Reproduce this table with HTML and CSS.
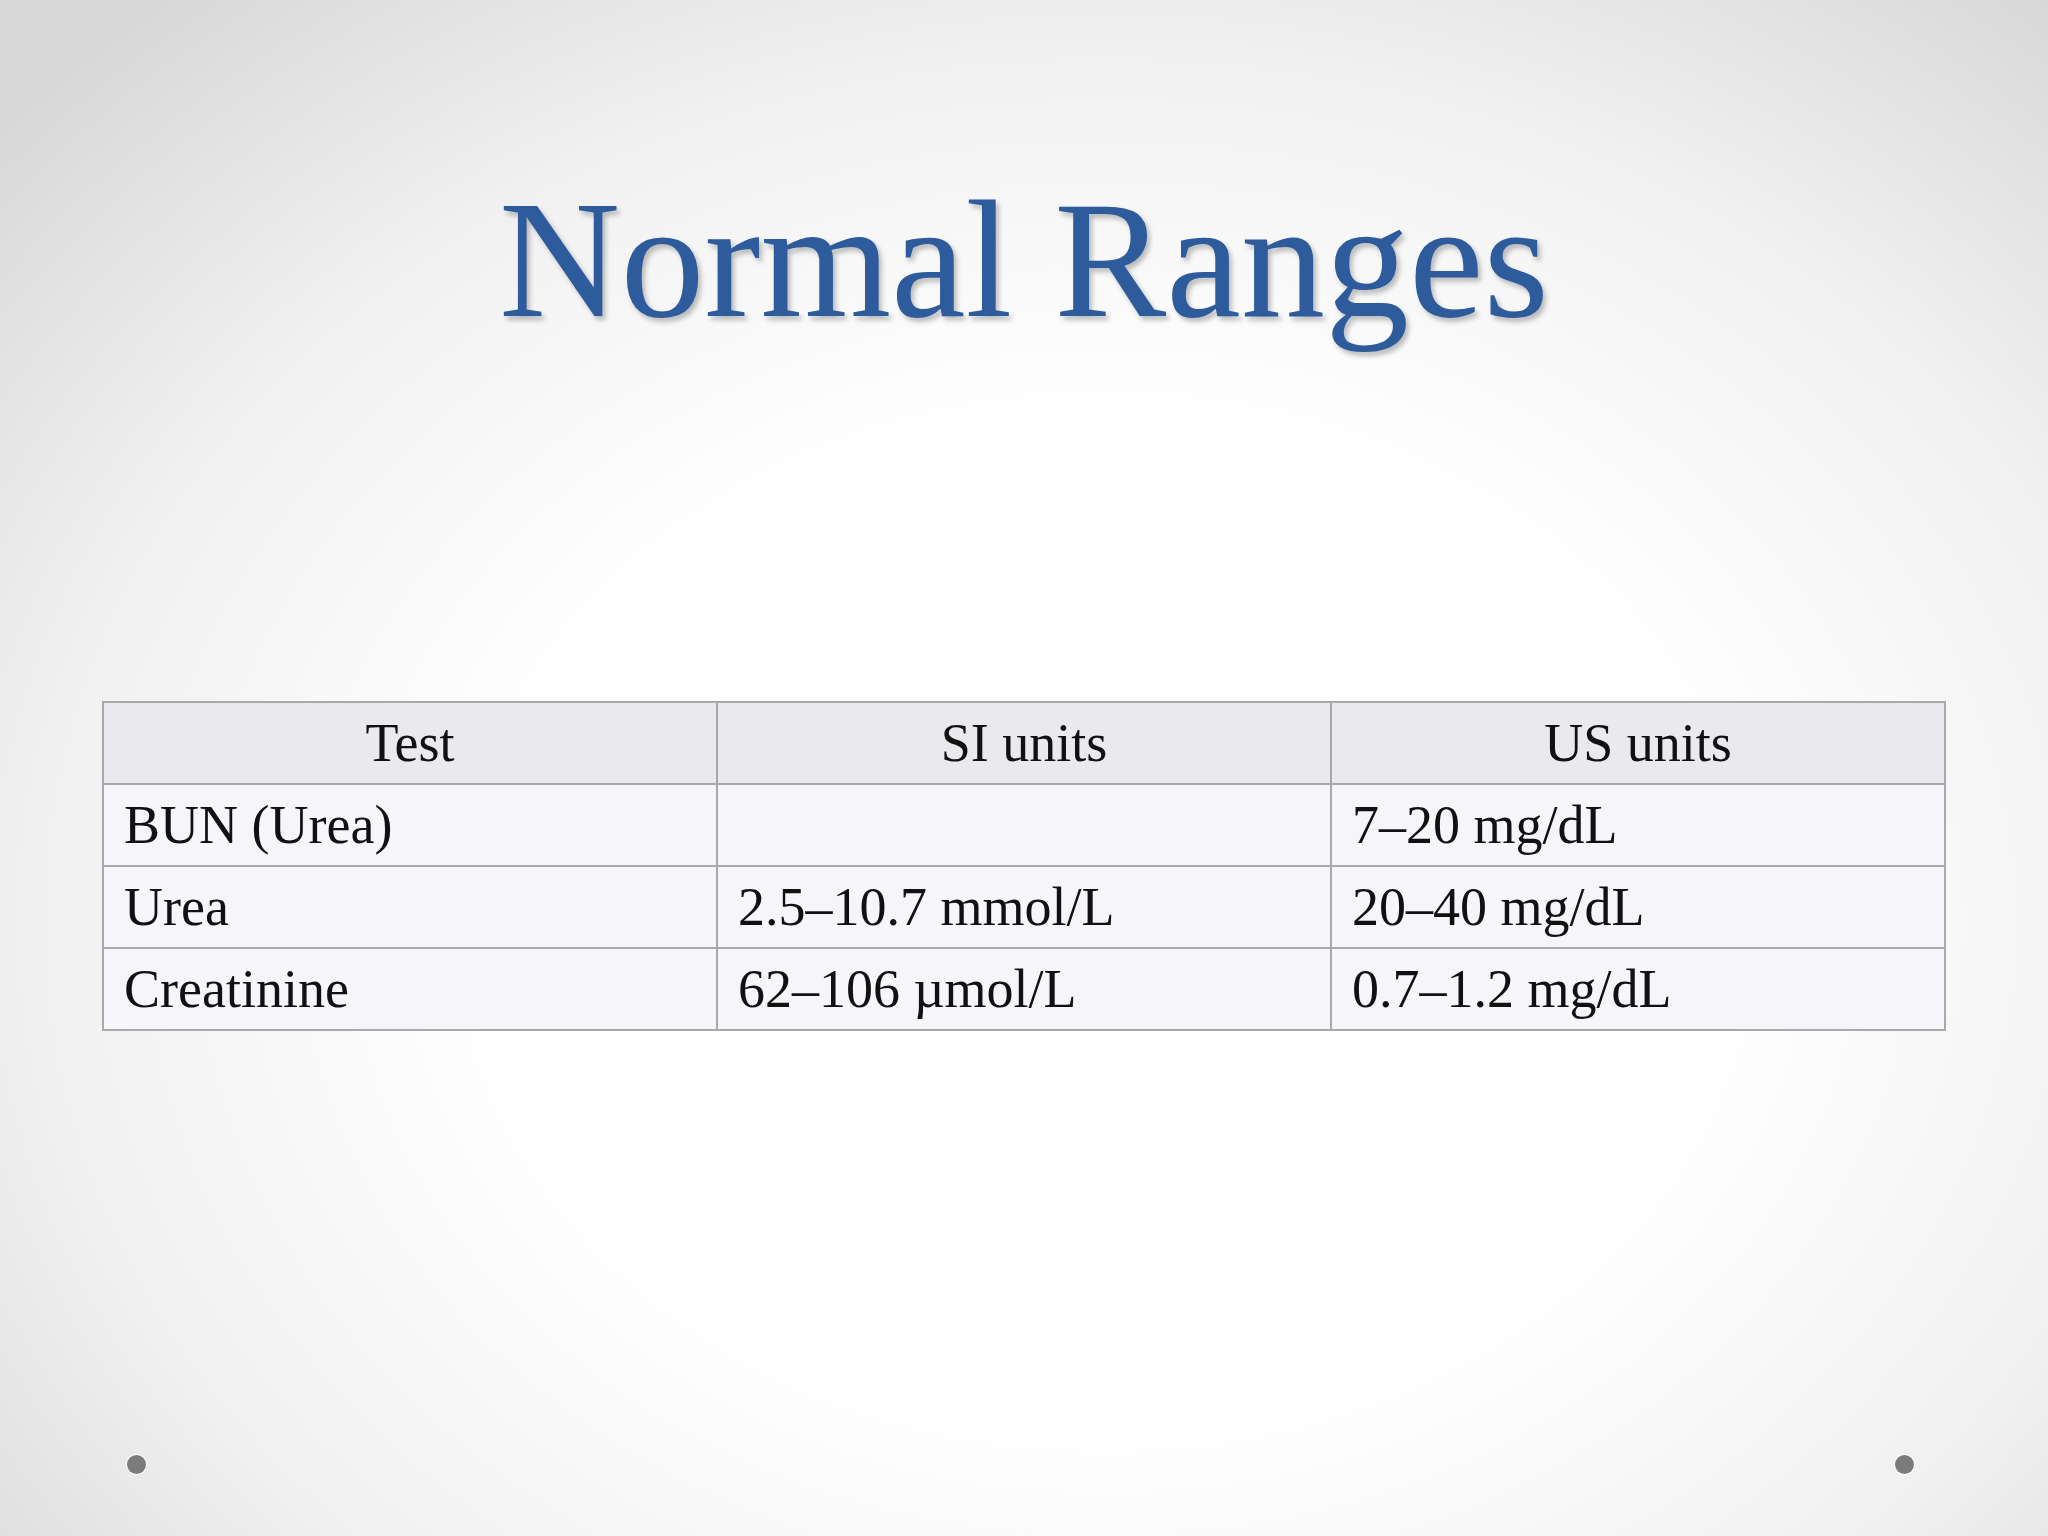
FILE: index.html
```html
<!DOCTYPE html>
<html>
  <head>
    <meta charset="UTF-8">
    <title>Normal Ranges</title>
    <link rel="stylesheet" href="styles.css">
  </head>
  <body>

    <div class="slide">
      <h1 class="title">Normal Ranges</h1>

      <table class="ranges">
        <thead>
          <tr>
            <th>Test</th>
            <th>SI units</th>
            <th>US units</th>
          </tr>
        </thead>
        <tbody>
          <tr>
            <td>BUN (Urea)</td>
            <td></td>
            <td>7–20 mg/dL</td>
          </tr>
          <tr>
            <td>Urea</td>
            <td>2.5–10.7 mmol/L</td>
            <td>20–40 mg/dL</td>
          </tr>
          <tr>
            <td>Creatinine</td>
            <td>62–106 µmol/L</td>
            <td>0.7–1.2 mg/dL</td>
          </tr>
        </tbody>
      </table>

      <footer>
        <span class="dot"></span>
        <span class="dot"></span>
      </footer>
    </div>

  </body>
</html>
```

FILE: styles.css
```css
html, body {
  height: 100%;
}

body {
  margin: 0;
  background: #fff;
}

.slide {
  width: 2048px;
  height: 1536px;
  display: flex;
  flex-direction: column;
  font-family: "Palatino Linotype", "Book Antiqua", Palatino, "P052", "URW Palladio L", "Liberation Serif", serif;
  background: radial-gradient(ellipse 72% 78% at 54% 60%, #ffffff 42%, #f1f1f1 72%, #d8d8d8 100%);
}

.title {
  margin: 175px 0 0;
  font-size: 168px;
  font-weight: normal;
  line-height: 1;
  text-align: center;
  color: #2d5b9c;
  text-shadow: 3px 4px 5px rgba(0, 0, 0, 0.25);
}

.ranges {
  margin: 358px 0 0 102px;
  width: 1844px;
  table-layout: fixed;
  border-collapse: collapse;
  font-size: 54px;
  color: #111;
}

.ranges th, .ranges td {
  height: 82px;
  padding: 0 0 0 20px;
  border: 2px solid #a9a9ab;
  line-height: 60px;
  box-sizing: border-box;
  text-align: left;
  font-weight: normal;
}

.ranges th {
  padding: 0;
  text-align: center;
  background: #eaeaee;
}

.ranges td {
  background: #f6f6fa;
}

footer {
  margin-top: auto;
  display: flex;
  justify-content: space-between;
  padding: 0 134px 62px 127px;
}

.dot {
  width: 19px;
  height: 19px;
  border-radius: 50%;
  background: #7b7b7b;
  box-shadow: 0 0 0 1px rgba(255, 255, 255, 0.8);
}
```
